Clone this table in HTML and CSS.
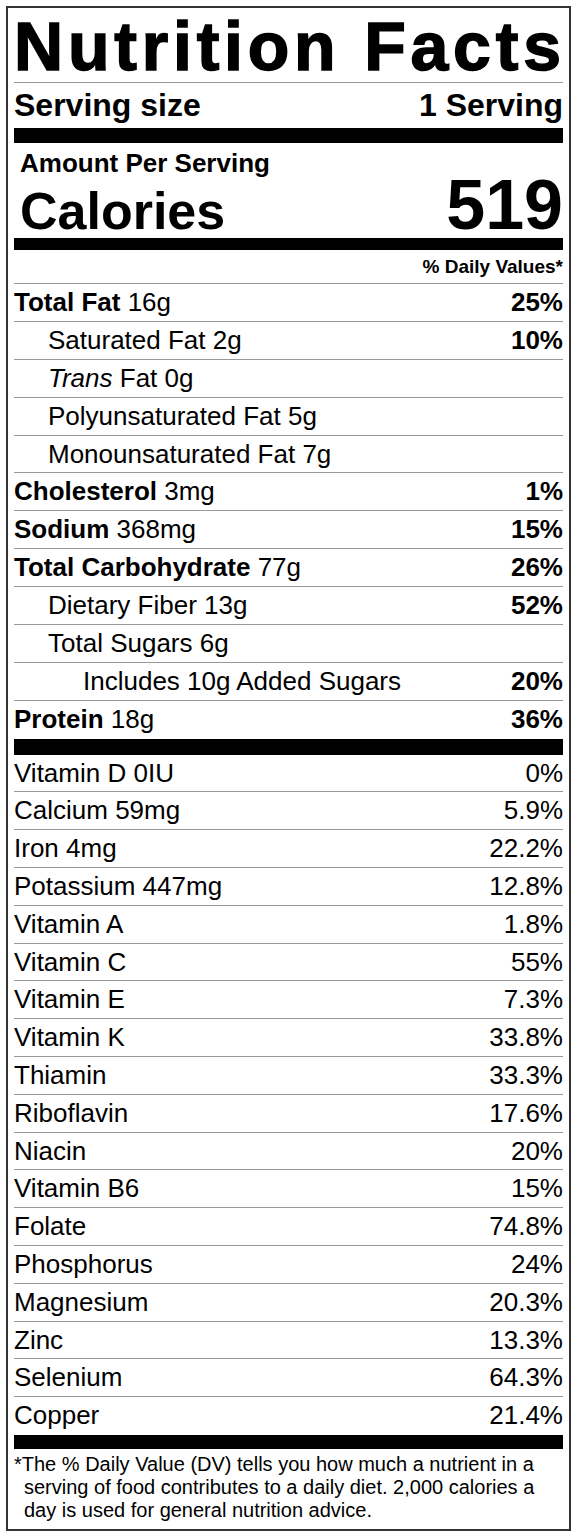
FILE: index.html
```html
<!DOCTYPE html>
<html lang="en">
<head>
    <meta charset="UTF-8">
    <meta name="viewport" content="width=device-width, initial-scale=1.0">
    <title>Nutrition Facts</title>
    <link rel="stylesheet" href="styles.css">
</head>
<body>

    <div class="label">
        <h1 class="title">Nutrition Facts</h1>
        <div class="serving">
            <span>Serving size</span>
            <span>1 Serving</span>
        </div>

        <div class="calories-block">
            <div class="amount">Amount Per Serving</div>
            <div class="calories">
                <span>Calories</span>
                <span class="cal-num">519</span>
            </div>
        </div>

        <div class="dv-head">% Daily Values*</div>

        <!-- Nutrienti principali -->
        <div class="nutrients">
            <div class="row"><span><b>Total Fat</b> 16g</span><b>25%</b></div>
            <div class="row sub"><span>Saturated Fat 2g</span><b>10%</b></div>
            <div class="row sub"><span><i>Trans</i> Fat 0g</span></div>
            <div class="row sub"><span>Polyunsaturated Fat 5g</span></div>
            <div class="row sub"><span>Monounsaturated Fat 7g</span></div>
            <div class="row"><span><b>Cholesterol</b> 3mg</span><b>1%</b></div>
            <div class="row"><span><b>Sodium</b> 368mg</span><b>15%</b></div>
            <div class="row"><span><b>Total Carbohydrate</b> 77g</span><b>26%</b></div>
            <div class="row sub"><span>Dietary Fiber 13g</span><b>52%</b></div>
            <div class="row sub"><span>Total Sugars 6g</span></div>
            <div class="row sub2"><span>Includes 10g Added Sugars</span><b>20%</b></div>
            <div class="row"><span><b>Protein</b> 18g</span><b>36%</b></div>
        </div>

        <!-- Vitamine e minerali -->
        <div class="vitamins">
            <div class="row"><span>Vitamin D 0IU</span><span>0%</span></div>
            <div class="row"><span>Calcium 59mg</span><span>5.9%</span></div>
            <div class="row"><span>Iron 4mg</span><span>22.2%</span></div>
            <div class="row"><span>Potassium 447mg</span><span>12.8%</span></div>
            <div class="row"><span>Vitamin A</span><span>1.8%</span></div>
            <div class="row"><span>Vitamin C</span><span>55%</span></div>
            <div class="row"><span>Vitamin E</span><span>7.3%</span></div>
            <div class="row"><span>Vitamin K</span><span>33.8%</span></div>
            <div class="row"><span>Thiamin</span><span>33.3%</span></div>
            <div class="row"><span>Riboflavin</span><span>17.6%</span></div>
            <div class="row"><span>Niacin</span><span>20%</span></div>
            <div class="row"><span>Vitamin B6</span><span>15%</span></div>
            <div class="row"><span>Folate</span><span>74.8%</span></div>
            <div class="row"><span>Phosphorus</span><span>24%</span></div>
            <div class="row"><span>Magnesium</span><span>20.3%</span></div>
            <div class="row"><span>Zinc</span><span>13.3%</span></div>
            <div class="row"><span>Selenium</span><span>64.3%</span></div>
            <div class="row"><span>Copper</span><span>21.4%</span></div>
        </div>

        <p class="footnote">*The % Daily Value (DV) tells you how much a nutrient in a serving of food contributes to a daily diet. 2,000 calories a day is used for general nutrition advice.</p>
    </div>

</body>
</html>
```

FILE: styles.css
```css
body {
    margin: 0;
    background-color: #fff;
    color: #000;
    font-family: "Liberation Sans", Arial, Helvetica, sans-serif;
}
.label {
    margin: 6px;
    border: 2px solid #333;
    padding: 0 6px;
}
.title {
    margin: 2px 0 0;
    font-size: 68px;
    line-height: 72px;
    font-weight: bold;
    letter-spacing: 4.8px;
    -webkit-text-stroke: 1.5px #000; /* piu' nero, come l'originale */
    white-space: nowrap;
    border-bottom: 1px solid #999;
}
.serving {
    display: flex;
    justify-content: space-between;
    font-size: 32px;
    font-weight: bold;
    line-height: 45px;
}
.calories-block {
    border-top: 15px solid #000;
    border-bottom: 12px solid #000;
    padding: 5px 0 6px 6px;
}
.amount {
    font-size: 26px;
    font-weight: bold;
    line-height: 30px;
}
.calories {
    display: flex;
    justify-content: space-between;
    align-items: baseline;
    height: 54px; /* altezza fissa: il 519 non deve allargare la riga */
    font-weight: bold;
    font-size: 52px;
    line-height: 54px;
}
.cal-num {
    font-size: 70px;
    line-height: 54px;
}
.dv-head {
    text-align: right;
    font-size: 19px;
    font-weight: bold;
    line-height: 33px;
    border-bottom: 1px solid #999;
}
.row {
    display: flex;
    justify-content: space-between;
    box-sizing: border-box;
    height: 37.9px;
    font-size: 26px;
    line-height: 36.9px;
    border-bottom: 1px solid #999;
    white-space: nowrap;
}
.row:last-child {
    border-bottom: none;
}
.row.sub {
    padding-left: 34px;
}
.row.sub2 {
    padding-left: 69px;
}
.nutrients {
    border-bottom: 16px solid #000;
}
.vitamins {
    border-bottom: 14px solid #000;
}
.vitamins .row {
    height: 37.8px;
    line-height: 36.8px;
}
.footnote {
    margin: 0;
    padding: 4px 0 7px 10px;
    text-indent: -10px;
    font-size: 20px;
    line-height: 23px;
}
```
